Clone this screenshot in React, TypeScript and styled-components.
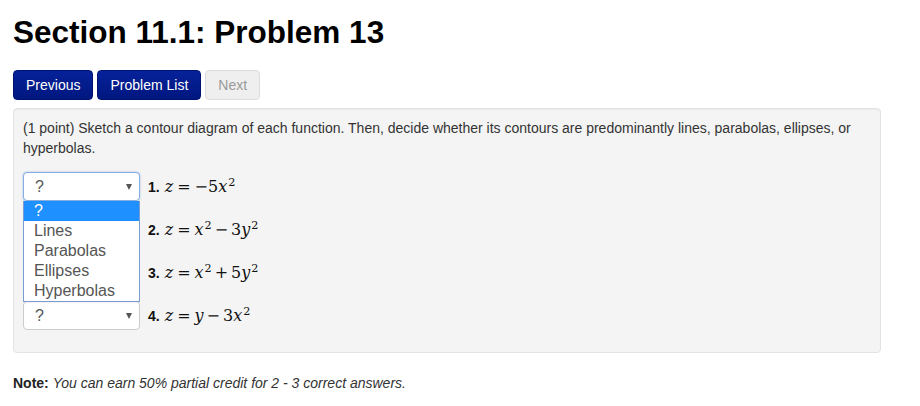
import React from "react";
import styled, { createGlobalStyle, css } from "styled-components";

const GlobalStyle = createGlobalStyle`
  html, body {
    margin: 0;
    padding: 0;
    background: #ffffff;
  }
  body {
    font-family: "Liberation Sans", Arial, sans-serif;
    font-size: 14px;
    line-height: 20px;
    color: #333333;
  }
  * { box-sizing: border-box; }
`;

const Page = styled.div`
  width: 868px;
  margin-left: 13px;
  padding-top: 12px;
`;

const Title = styled.h2`
  margin: 0 0 18px;
  font-family: "Liberation Sans", Arial, sans-serif;
  font-size: 31.5px;
  line-height: 40px;
  font-weight: bold;
  color: #000000;
`;

const NavBar = styled.div`
  display: flex;
  gap: 3px;
  margin-bottom: 8px;
`;

const NavButton = styled.button<{ $disabled?: boolean }>`
  height: 30px;
  padding: 0 12px;
  margin-right: 1px;
  border-radius: 4px;
  font-family: "Liberation Sans", Arial, sans-serif;
  font-size: 14px;
  line-height: 28px;
  cursor: pointer;
  ${(p) =>
    p.$disabled
      ? css`
          background: #efefef;
          border: 1px solid #dcdcdc;
          color: #9a9a9a;
        `
      : css`
          background: linear-gradient(to bottom, #06229a, #00177f);
          border: 1px solid #001270;
          color: #ffffff;
        `}
`;

const Well = styled.div`
  background: #f4f4f4;
  border: 1px solid #e3e3e3;
  border-radius: 4px;
  box-shadow: inset 0 1px 1px rgba(0, 0, 0, 0.04);
  padding: 9px 9px 22px;
`;

const Prompt = styled.p`
  margin: 0 0 14px;
  font-size: 14px;
  line-height: 20px;
  color: #333333;
`;

const AnswerList = styled.div`
  display: grid;
  row-gap: 14px;
`;

const AnswerRow = styled.div`
  display: flex;
  align-items: center;
  gap: 8px;
  height: 29px;
`;

const SelectWrap = styled.div`
  position: relative;
  width: 117px;
  height: 29px;
  flex: none;
`;

const SelectBox = styled.div<{ $focused?: boolean; $covered?: boolean }>`
  width: 100%;
  height: 100%;
  display: flex;
  align-items: center;
  justify-content: space-between;
  padding: 0 7px 0 11px;
  background: #ffffff;
  border-radius: 4px;
  font-size: 16px;
  color: #555555;
  visibility: ${(p) => (p.$covered ? "hidden" : "visible")};
  border: 1px solid ${(p) => (p.$focused ? "#86ade2" : "#cccccc")};
  box-shadow: ${(p) =>
    p.$focused ? "0 0 2px rgba(82, 140, 220, 0.55)" : "inset 0 1px 1px rgba(0,0,0,0.05)"};
`;

const Arrow = styled.span`
  width: 0;
  height: 0;
  border-left: 3.5px solid transparent;
  border-right: 3.5px solid transparent;
  border-top: 6px solid #555555;
  margin-top: 1px;
`;

const Dropdown = styled.ul`
  position: absolute;
  top: 100%;
  left: 0;
  width: 117px;
  margin: 0;
  padding: 0;
  list-style: none;
  background: #ffffff;
  border: 1px solid #7a9bd0;
  border-top: none;
  z-index: 10;
`;

const Option = styled.li<{ $active?: boolean }>`
  height: 20px;
  line-height: 20px;
  padding-left: 10px;
  font-size: 16px;
  color: ${(p) => (p.$active ? "#ffffff" : "#555555")};
  background: ${(p) => (p.$active ? "#1e90ff" : "transparent")};
`;

const Label = styled.span`
  display: flex;
  align-items: baseline;
  gap: 5px;
`;

const Num = styled.b`
  font-family: "Liberation Sans", Arial, sans-serif;
  font-size: 14px;
  color: #111111;
`;

const MathText = styled.span`
  font-family: "DejaVu Serif", serif;
  font-size: 16px;
  color: #111111;
  white-space: nowrap;
`;

const Var = styled.i`
  font-style: italic;
`;

const Rel = styled.span`
  margin: 0 4px;
`;

const Bin = styled.span`
  margin: 0 3px;
`;

const Sup = styled.sup`
  font-size: 70%;
  vertical-align: 0.5em;
  line-height: 0;
  margin-left: 1px;
`;

const Note = styled.p`
  margin: 20px 0 0;
  font-size: 14px;
  line-height: 20px;
  color: #222222;
`;

const NoteText = styled.i`
  color: #333333;
`;

const options = ["?", "Lines", "Parabolas", "Ellipses", "Hyperbolas"];

const equations: React.ReactNode[] = [
  <>
    <Var>z</Var>
    <Rel>=</Rel>−5<Var>x</Var>
    <Sup>2</Sup>
  </>,
  <>
    <Var>z</Var>
    <Rel>=</Rel>
    <Var>x</Var>
    <Sup>2</Sup>
    <Bin>−</Bin>3<Var>y</Var>
    <Sup>2</Sup>
  </>,
  <>
    <Var>z</Var>
    <Rel>=</Rel>
    <Var>x</Var>
    <Sup>2</Sup>
    <Bin>+</Bin>5<Var>y</Var>
    <Sup>2</Sup>
  </>,
  <>
    <Var>z</Var>
    <Rel>=</Rel>
    <Var>y</Var>
    <Bin>−</Bin>3<Var>x</Var>
    <Sup>2</Sup>
  </>,
];

export default function App() {
  return (
    <>
      <GlobalStyle />
      <Page>
        <Title>Section 11.1: Problem 13</Title>
        <NavBar>
          <NavButton>Previous</NavButton>
          <NavButton>Problem List</NavButton>
          <NavButton $disabled>Next</NavButton>
        </NavBar>
        <Well>
          <Prompt>
            (1 point) Sketch a contour diagram of each function. Then, decide whether its contours
            are predominantly lines, parabolas, ellipses, or hyperbolas.
          </Prompt>
          <AnswerList>
            {equations.map((eq, i) => (
              <AnswerRow key={i}>
                <SelectWrap>
                  <SelectBox $focused={i === 0} $covered={i === 1 || i === 2}>
                    <span>?</span>
                    <Arrow />
                  </SelectBox>
                  {i === 0 && (
                    <Dropdown>
                      {options.map((o, j) => (
                        <Option key={o} $active={j === 0}>
                          {o}
                        </Option>
                      ))}
                    </Dropdown>
                  )}
                </SelectWrap>
                <Label>
                  <Num>{i + 1}.</Num>
                  <MathText>{eq}</MathText>
                </Label>
              </AnswerRow>
            ))}
          </AnswerList>
        </Well>
        <Note>
          <b>Note:</b> <NoteText>You can earn 50% partial credit for 2 - 3 correct answers.</NoteText>
        </Note>
      </Page>
    </>
  );
}
